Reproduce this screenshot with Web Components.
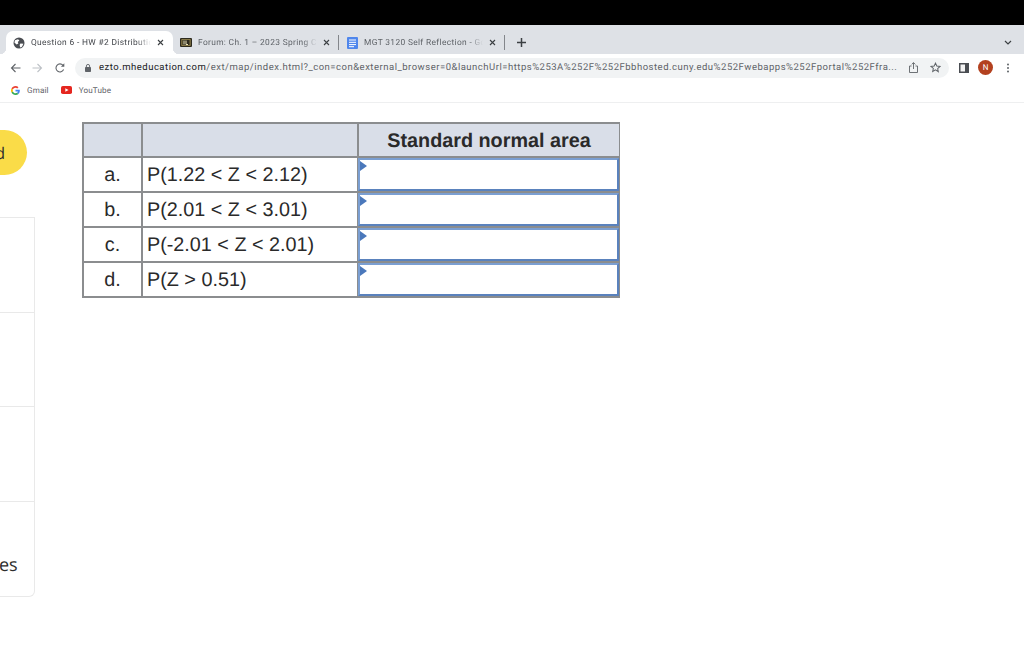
<!DOCTYPE html>
<html>
<head>
<meta charset="utf-8">
<title>Question 6 - HW #2 Distribution</title>
<style>
  html, body { margin: 0; padding: 0; height: 100%; background: #fff; overflow: hidden; }
  body { font-family: Roboto, "Liberation Sans", sans-serif; text-rendering: geometricPrecision; }
</style>
</head>
<body>
<browser-window>
  <tab-strip slot="tabs">
    <browser-tab active width="167" title-text="Question 6 - HW #2 Distribution">
      <svg slot="icon" width="12" height="12" viewBox="0 0 12 12"><circle cx="6" cy="6" r="5.5" fill="#4a4d52"/><path d="M2 3.2 5 2.2 6.4 3.4 4.8 5 5.4 6.6 3.6 7.6 1.4 5.6ZM7.4 6.4 10.400 6.800 9 9.800 7.200 10.400 6.600 8Z" fill="#fff"/></svg>
    </browser-tab>
    <browser-tab width="166" title-text="Forum: Ch. 1 – 2023 Spring COMM" sep>
      <svg slot="icon" width="12" height="9" viewBox="0 0 12 9"><rect width="12" height="9" rx="1" fill="#2d2a1e"/><rect x="1.5" y="1.2" width="9" height="6.600" fill="#b9a45c"/><rect x="2.300" y="1.800" width="7.400" height="5.400" fill="#2d2a1e"/><path d="M4 2.500v4M6 2.500v4h2" stroke="#efe6bd" fill="none"/></svg>
    </browser-tab>
    <browser-tab width="166" title-text="MGT 3120 Self Reflection - Google" sep>
      <svg slot="icon" width="11" height="12" viewBox="0 0 11 12"><rect width="11" height="12" rx="1" fill="#4f86ec"/><path d="M2 3h7M2 5.300h7M2 7.600h7M2 9.700h5" stroke="#fff" stroke-width="1"/></svg>
    </browser-tab>
  </tab-strip>
  <nav-bar slot="toolbar"
    url-host="ezto.mheducation.com"
    url-rest="/ext/map/index.html?_con=con&amp;external_browser=0&amp;launchUrl=https%253A%252F%252Fbbhosted.cuny.edu%252Fwebapps%252Fportal%252Ffra..."></nav-bar>
  <bookmark-bar slot="bookmarks">
    <book-mark label="Gmail">
      <svg slot="icon" width="9" height="9" viewBox="0 0 48 48"><path fill="#ea4335" d="M24 9.500c3.500 0 6.700 1.300 9.100 3.500l6.800-6.800C35.800 2.400 30.300 0 24 0 14.600 0 6.500 5.400 2.600 13.200l7.900 6.100C12.400 13.700 17.700 9.500 24 9.500z"/><path fill="#4285f4" d="M47 24.500c0-1.600-.2-3.100-.4-4.500H24v9h13c-.6 3-2.200 5.500-4.800 7.200l7.700 6C44.400 38 47 31.800 47 24.500z"/><path fill="#fbbc05" d="M10.500 28.700A14.500 14.500 0 0 1 10.500 19.300l-7.900-6.100a24 24 0 0 0 0 21.600z"/><path fill="#34a853" d="M24 48c6.500 0 11.900-2.100 15.900-5.800l-7.700-6c-2.200 1.400-4.900 2.300-8.200 2.300-6.300 0-11.600-4.200-13.500-9.800l-7.900 6.100C6.500 42.600 14.600 48 24 48z"/></svg>
    </book-mark>
    <book-mark label="YouTube" gap="39">
      <svg slot="icon" width="11" height="8" viewBox="0 0 11 8"><rect width="11" height="8" rx="1.800" fill="#e5261f"/><path d="M4.300 2.200 7.600 4 4.300 5.800Z" fill="#fff"/></svg>
    </book-mark>
  </bookmark-bar>

  <page-layout slot="page">
    <side-rail slot="rail">
      <yellow-pill>d</yellow-pill>
      <link-card>
        <card-item></card-item>
        <card-item></card-item>
        <card-item></card-item>
        <card-item last>es</card-item>
      </link-card>
    </side-rail>
    <area-table>
      <area-row head answer="Standard normal area"></area-row>
      <area-row letter="a." expr="P(1.22 &lt; Z &lt; 2.12)"></area-row>
      <area-row letter="b." expr="P(2.01 &lt; Z &lt; 3.01)"></area-row>
      <area-row letter="c." expr="P(-2.01 &lt; Z &lt; 2.01)"></area-row>
      <area-row letter="d." expr="P(Z &gt; 0.51)"></area-row>
    </area-table>
  </page-layout>
</browser-window>

<script>
// kleine helper: shadow root openen en markup zetten
function mount(el, html) {
	if (!el.shadowRoot) el.attachShadow({ mode: 'open' });
	el.shadowRoot.innerHTML = html;
}

class BrowserWindow extends HTMLElement {
	connectedCallback() {
		mount(this, `
      <style>
        :host { display: flex; flex-direction: column; height: 666px; }
        .top { height: 25px; background: #000; flex: none; }
      </style>
      <div class="top"></div>
      <slot name="tabs"></slot>
      <slot name="toolbar"></slot>
      <slot name="bookmarks"></slot>
      <slot name="page"></slot>
    `);
	}
}

class TabStrip extends HTMLElement {
	connectedCallback() {
		mount(this, `
      <style>
        :host {
          display: flex; align-items: flex-end; height: 29px; flex: none;
          background: #dee1e6; padding-left: 6px; box-sizing: border-box; position: relative;
        }
        .plus { width: 32px; height: 23px; display: flex; align-items: center; justify-content: center; }
        .chev { margin-left: auto; margin-right: 12px; height: 23px; display: flex; align-items: center; }
      </style>
      <slot></slot>
      <div class="plus">
        <svg width="9" height="9" viewBox="0 0 9 9"><path d="M4.500 0v9M0 4.500h9" stroke="#3c4043" stroke-width="1.500"/></svg>
      </div>
      <div class="chev">
        <svg width="8" height="5" viewBox="0 0 8 5"><path d="M1 1l3 3 3-3" stroke="#3c4043" stroke-width="1.200" fill="none"/></svg>
      </div>
    `);
	}
}

class BrowserTab extends HTMLElement {
	connectedCallback() {
		const w = this.getAttribute('width');
		mount(this, `
      <style>
        :host {
          display: flex; align-items: center; height: 23px; width: ${w}px; box-sizing: border-box;
          padding: 0 7px 0 7px; gap: 6px; position: relative;
          font: 8.400px Roboto, "Liberation Sans", sans-serif; letter-spacing: .34px; color: #5f6368;
        }
        :host([active]) { background: #fff; border-radius: 7px 7px 0 0; color: #45484d; }
        :host([active])::before, :host([active])::after {
          content: ""; position: absolute; bottom: 0; width: 6px; height: 6px;
        }
        :host([active])::before { left: -6px; background: radial-gradient(circle at 0 0, transparent 6px, #fff 6.500px); }
        :host([active])::after { right: -6px; background: radial-gradient(circle at 100% 0, transparent 6px, #fff 6.500px); }
        :host([sep])::after {
          content: ""; position: absolute; right: 0; top: 4px; height: 15px; width: 1px; background: #83868b;
        }
        .icon { width: 12px; flex: none; display: flex; align-items: center; justify-content: center; }
        .title {
          flex: 1; min-width: 0; white-space: nowrap; overflow: hidden; margin-right: -3px;
          -webkit-mask-image: linear-gradient(90deg, #000 88%, transparent);
        }
        .x { flex: none; width: 12px; display: flex; justify-content: center; }
      </style>
      <span class="icon"><slot name="icon"></slot></span>
      <span class="title">${this.getAttribute('title-text')}</span>
      <span class="x">
        <svg width="7" height="7" viewBox="0 0 7 7"><path d="M1 1l5 5M6 1l-5 5" stroke="#3c4043" stroke-width="1.100"/></svg>
      </span>
    `);
	}
}

class NavBar extends HTMLElement {
	connectedCallback() {
		const host = this.getAttribute('url-host');
		const rest = this.getAttribute('url-rest').replace(/&/g, '&amp;');
		mount(this, `
      <style>
        :host {
          display: flex; align-items: center; height: 27px; flex: none; background: #fff;
          padding: 0 10px 0 9px; box-sizing: border-box;
        }
        .btn { display: flex; align-items: center; justify-content: center; width: 12px; flex: none; }
        .nav { display: flex; gap: 10.500px; margin-right: 9px; }
        .omni {
          width: 874px; height: 20px; border-radius: 10px; background: #f1f3f4; flex: none;
          display: flex; align-items: center; padding: 0 8px 0 10px; box-sizing: border-box;
        }
        .url {
          flex: 1; min-width: 0; white-space: nowrap; overflow: hidden; margin-left: 8px;
          font: 9.500px Roboto, "Liberation Sans", sans-serif; letter-spacing: .5px; color: #5f6368;
        }
        .url b { font-weight: 400; color: #202124; }
        .end { display: flex; gap: 9px; align-items: center; margin-left: 10px; }
        .ava {
          width: 15px; height: 15px; border-radius: 50%; background: #b3411f; color: #fff; flex: none;
          font: 8px Roboto, sans-serif; display: flex; align-items: center; justify-content: center;
        }
      </style>
      <div class="nav">
        <span class="btn"><svg width="11" height="10" viewBox="0 0 11 10"><path d="M10.500 5H1.500M5.500 1l-4 4 4 4" stroke="#5f6368" stroke-width="1.100" fill="none"/></svg></span>
        <span class="btn"><svg width="11" height="10" viewBox="0 0 11 10"><path d="M.5 5h9M5.500 1l4 4-4 4" stroke="#bdc1c6" stroke-width="1.100" fill="none"/></svg></span>
        <span class="btn"><svg width="10" height="10" viewBox="0 0 10 10"><path d="M8.600 6.600A4 4 0 1 1 8 2.300" stroke="#5f6368" stroke-width="1.100" fill="none"/><path d="M9.300.3v3.400H5.900Z" fill="#5f6368"/></svg></span>
      </div>
      <div class="omni">
        <svg width="6" height="8" viewBox="0 0 6 8" style="flex:none"><rect y="3" width="6" height="5" rx=".8" fill="#5f6368"/><path d="M1.400 3.500V2a1.600 1.600 0 0 1 3.200 0v1.500" stroke="#5f6368" fill="none" stroke-width=".9"/></svg>
        <span class="url"><b>${host}</b>${rest}</span>
        <svg width="9" height="11" viewBox="0 0 9 11" style="margin:0 12px 0 11px;flex:none"><path d="M2.500 4H.5v6.500h8V4H6.500M4.500 7V.8M2.700 2.400 4.500.6l1.800 1.800" stroke="#5f6368" fill="none" stroke-width=".9"/></svg>
        <svg width="11" height="11" viewBox="0 0 24 24" style="flex:none"><path d="M12 2.500l2.900 6.300 6.900.8-5.100 4.700 1.400 6.800L12 17l-6.100 3.600 1.400-6.800L2.200 9.600l6.900-.8Z" stroke="#5f6368" stroke-width="2.200" fill="none"/></svg>
      </div>
      <div class="end">
        <svg width="10" height="10" viewBox="0 0 10 10" style="flex:none"><rect x=".75" y=".75" width="8.500" height="8.500" fill="#f4f4f4" stroke="#4a4d52" stroke-width="1.500"/><rect x="6" y="1" width="3" height="8" fill="#4a4d52"/></svg>
        <span class="ava">N</span>
        <svg width="4" height="10" viewBox="0 0 4 10" style="flex:none;margin-left:4px"><circle cx="2" cy="1.500" r="1" fill="#5f6368"/><circle cx="2" cy="5" r="1" fill="#5f6368"/><circle cx="2" cy="8.500" r="1" fill="#5f6368"/></svg>
      </div>
    `);
	}
}

class BookmarkBar extends HTMLElement {
	connectedCallback() {
		mount(this, `
      <style>
        :host {
          display: flex; align-items: center; height: 22px; flex: none; background: #fff;
          padding: 0 0 3px 11px; box-sizing: border-box; border-bottom: 1px solid #eeeff0;
        }
      </style>
      <slot></slot>
    `);
	}
}

class BookMark extends HTMLElement {
	connectedCallback() {
		const gap = this.getAttribute('gap');
		mount(this, `
      <style>
        :host {
          display: flex; align-items: center; gap: 7px;
          font: 8.100px Roboto, "Liberation Sans", sans-serif; letter-spacing: .15px; color: #5f6368;
          ${gap ? 'margin-left: 12px;' : ''}
        }
        slot[name=icon] { display: flex; }
      </style>
      <slot name="icon"></slot><span>${this.getAttribute('label')}</span>
    `);
	}
}

class PageLayout extends HTMLElement {
	connectedCallback() {
		mount(this, `
      <style>
        :host { display: flex; flex: 1; min-height: 0; overflow: hidden; background: #fff; }
      </style>
      <slot name="rail"></slot>
      <slot></slot>
    `);
	}
}

class SideRail extends HTMLElement {
	connectedCallback() {
		mount(this, `
      <style>
        :host { display: flex; flex-direction: column; width: 35px; flex: none; padding-top: 27px; box-sizing: border-box; }
      </style>
      <slot></slot>
    `);
	}
}

class YellowPill extends HTMLElement {
	connectedCallback() {
		mount(this, `
      <style>
        :host {
          display: flex; align-items: center; justify-content: flex-end; flex: none;
          width: 27px; height: 45px; box-sizing: border-box; padding-right: 22px;
          background: #fadc48; border-radius: 0 23px 23px 0;
          font: 16px "Open Sans", "Liberation Sans", sans-serif; color: #2d2d2d;
        }
      </style>
      <slot></slot>
    `);
	}
}

class LinkCard extends HTMLElement {
	connectedCallback() {
		mount(this, `
      <style>
        :host {
          display: flex; flex-direction: column; margin-top: 42px; height: 380px; box-sizing: border-box;
          border: solid #e9e9e9; border-width: 1.500px 1.500px 1.500px 0; border-radius: 0 0 6px 0;
        }
      </style>
      <slot></slot>
    `);
	}
}

class CardItem extends HTMLElement {
	connectedCallback() {
		mount(this, `
      <style>
        :host {
          display: flex; align-items: flex-end; height: 94.500px; box-sizing: border-box; flex: none;
          border-bottom: 1.500px solid #e9e9e9; padding: 0 0 19px 0;
          font: 18px "Open Sans", "Liberation Sans", sans-serif; color: #2d2d2d;
        }
        :host([last]) { border-bottom: 0; justify-content: flex-start; margin-left: -1px; }
      </style>
      <slot></slot>
    `);
	}
}

class AreaTable extends HTMLElement {
	connectedCallback() {
		mount(this, `
      <style>
        :host {
          display: block; width: 538px; height: 176px; margin: 19px 0 0 47px; flex: none;
          box-sizing: border-box; background: #fff;
          border-left: 2px solid #8b8d8f; border-top: 2px solid #8b8d8f;
          border-right: 1px solid #8b8d8f;
          font: 19.800px "Liberation Sans", Arial, sans-serif; color: #2a2a2a;
        }
      </style>
      <slot></slot>
    `);
	}
}

class AreaRow extends HTMLElement {
	connectedCallback() {
		const head = this.hasAttribute('head');
		const letter = this.getAttribute('letter') || '';
		const expr = (this.getAttribute('expr') || '').replace(/&/g, '&amp;').replace(/</g, '&lt;').replace(/>/g, '&gt;');
		const answer = this.getAttribute('answer') || '';
		mount(this, `
      <style>
        :host {
          display: grid; grid-template-columns: 59px 216px 1fr; height: 35px; box-sizing: border-box;
          border-bottom: 2px solid #8b8d8f;
        }
        :host([head]) { height: 34px; background: #d9dee8; }
        .c { border-right: 2px solid #8b8d8f; display: flex; align-items: center; min-width: 0; padding-top: 2px; box-sizing: border-box; }
        .letter { justify-content: center; }
        .expr { padding-left: 4px; }
        .ans { border-right: 0; justify-content: center; font-weight: 700; }
        .input {
          border: 2px solid #5a82bd; border-top-color: #7b9fd2; border-left-color: #7b9fd2;
          height: 33px; width: 261px; margin-left: -1px; box-sizing: border-box; background: #fff; position: relative;
        }
        .input::before {
          content: ""; position: absolute; left: 0; top: 1px;
          border-left: 7px solid #4a78bb; border-top: 5px solid transparent; border-bottom: 5px solid transparent;
        }
      </style>
      <div class="c letter">${letter}</div>
      <div class="c expr">${expr}</div>
      ${head ? `<div class="c ans">${answer}</div>` : '<div class="input"></div>'}
    `);
	}
}

customElements.define('browser-window', BrowserWindow);
customElements.define('tab-strip', TabStrip);
customElements.define('browser-tab', BrowserTab);
customElements.define('nav-bar', NavBar);
customElements.define('bookmark-bar', BookmarkBar);
customElements.define('book-mark', BookMark);
customElements.define('page-layout', PageLayout);
customElements.define('side-rail', SideRail);
customElements.define('yellow-pill', YellowPill);
customElements.define('link-card', LinkCard);
customElements.define('card-item', CardItem);
customElements.define('area-table', AreaTable);
customElements.define('area-row', AreaRow);
</script>
</body>
</html>
